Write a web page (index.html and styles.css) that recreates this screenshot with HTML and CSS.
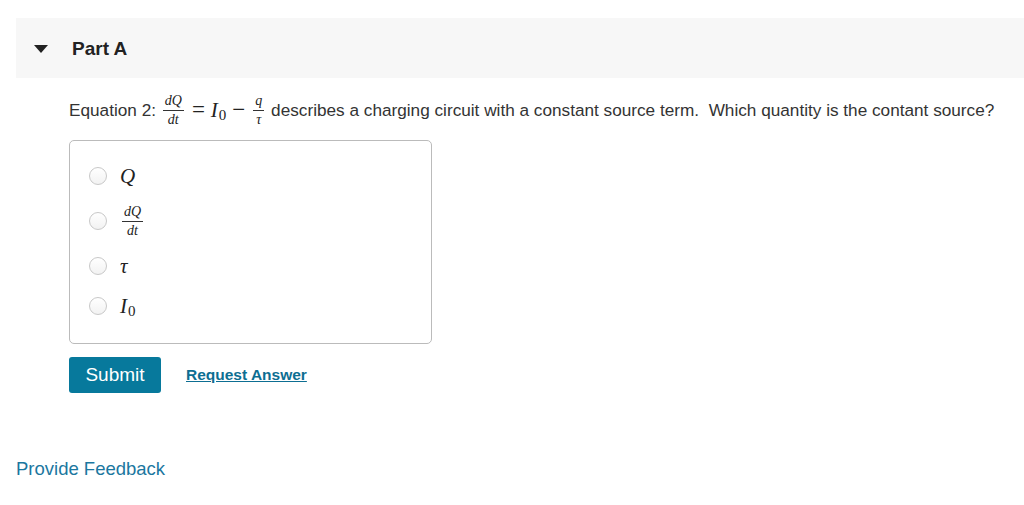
FILE: index.html
```html
<!DOCTYPE html>
<html lang="en">
<head>
    <meta charset="UTF-8">
    <meta name="viewport" content="width=device-width, initial-scale=1.0">
    <title>Part A</title>
    <link rel="stylesheet" href="styles.css">
</head>
<body>
    <main>
        <!-- 标题栏 -->
        <div class="part-head">
            <span class="caret"></span>
            <h2>Part A</h2>
        </div>

        <div class="part-body">
            <p class="question">Equation 2: <span class="math"><span class="frac"><span class="num"><i>dQ</i></span><span class="den"><i>dt</i></span></span><span class="op">=</span><i class="big">I</i><sub>0</sub><span class="op">&minus;</span><span class="frac"><span class="num"><i>q</i></span><span class="den"><i>&tau;</i></span></span></span> describes a charging circuit with a constant source term.&nbsp; Which quantity is the contant source?</p>

            <!-- 选项 -->
            <div class="choices">
                <label class="choice"><span class="radio"></span><span class="math"><i class="big">Q</i></span></label>
                <label class="choice tall"><span class="radio"></span><span class="math"><span class="frac"><span class="num"><i>dQ</i></span><span class="den"><i>dt</i></span></span></span></label>
                <label class="choice"><span class="radio"></span><span class="math"><i class="big">&tau;</i></span></label>
                <label class="choice"><span class="radio"></span><span class="math"><i class="big">I</i><sub>0</sub></span></label>
            </div>

            <div class="actions">
                <button class="submit">Submit</button>
                <a class="request" href="#">Request Answer</a>
            </div>
        </div>

        <a class="feedback" href="#">Provide Feedback</a>
    </main>
</body>
</html>
```

FILE: styles.css
```css
*{
    margin: 0;
    padding: 0;
    box-sizing: border-box;
}
body{
    font-family: "Liberation Sans", Arial, sans-serif;
    color: #333;
    background: #fff;
}
.part-head{
    display: flex;
    align-items: center;
    height: 60px;
    margin: 18px 0 0 16px;
    padding-left: 18px;
    background: #f7f7f7;
}
.caret{
    width: 0;
    height: 0;
    border-left: 7px solid transparent;
    border-right: 7px solid transparent;
    border-top: 8px solid #222;
    margin-top: 2px;
}
.part-head h2{
    margin-left: 24px;
    margin-top: 2px;
    font-size: 19px;
    font-weight: bold;
    color: #222;
}
.part-body{
    padding-left: 69px;
}
.question{
    font-size: 17.2px;
    line-height: 36px;
    margin-top: 14px;
    white-space: nowrap;
}
.math{
    font-family: "Liberation Serif", "DejaVu Serif", serif;
    display: inline-flex;
    align-items: center;
    vertical-align: middle;
    color: #222;
}
.question .math{
    margin-top: -2px;
}
.math i{
    font-style: italic;
}
.math .big{
    font-size: 21px;
    line-height: 24px;
}
.math sub{
    font-size: 15px;
    line-height: 15px;
    position: relative;
    top: 5px;
    margin-left: 1px;
}
.op{
    font-size: 23px;
    line-height: 24px;
    margin: 0 6px;
}
.frac{
    display: inline-flex;
    flex-direction: column;
    align-items: center;
    font-size: 14px;
    line-height: 14px;
    margin: 0 2px;
}
.frac .num{
    padding: 0 2px 2px;
    border-bottom: 1px solid #333;
}
.frac .den{
    padding-top: 2px;
}
.choices{
    width: 363px;
    margin-top: 12px;
    padding: 20px 0 22px 19px;
    border: 1px solid #bbb;
    border-radius: 5px;
    display: flex;
    flex-direction: column;
    gap: 10px;
}
.choice{
    display: flex;
    align-items: center;
    height: 30px;
}
.choice.tall{
    height: 40px;
}
.radio{
    width: 18px;
    height: 18px;
    border-radius: 50%;
    border: 1px solid #c8c8c8;
    background: linear-gradient(#fff, #f2f2f2);
    margin-right: 13px;
}
.actions{
    display: flex;
    align-items: center;
    margin-top: 13px;
}
.submit{
    width: 92px;
    height: 36px;
    border: none;
    border-radius: 3px;
    background: #07799c;
    color: #fff;
    font-family: "Liberation Sans", Arial, sans-serif;
    font-size: 19px;
}
.request{
    margin-left: 25px;
    font-size: 15.5px;
    font-weight: bold;
    color: #0d6e92;
    text-decoration: underline;
}
.feedback{
    display: block;
    margin: 65px 0 0 16px;
    font-size: 18.5px;
    color: #1b77a0;
    text-decoration: none;
}
```
